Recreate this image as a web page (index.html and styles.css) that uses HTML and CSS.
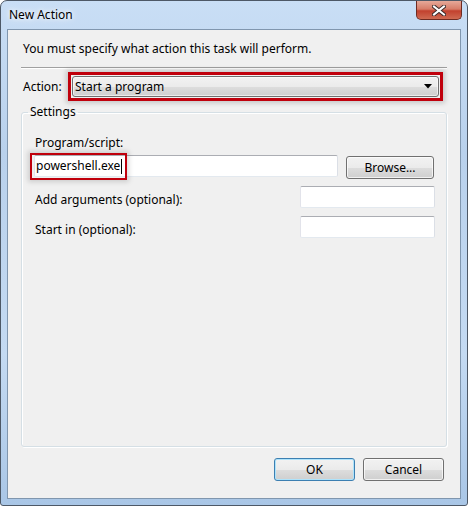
FILE: index.html
```html
<!DOCTYPE html>
<html lang="en">
<head>
    <meta charset="UTF-8">
    <title>New Action</title>
    <link rel="stylesheet" href="styles.css">
</head>
<body>
    <div class="window">
        <div class="titlebar">
            <span class="title">New Action</span>
            <div class="close">
                <svg width="14" height="11" viewBox="0 0 14 11">
                    <path d="M2 1.5 L12 9.5 M12 1.5 L2 9.5" stroke="#3a2a2a" stroke-width="4" stroke-linecap="square"/>
                    <path d="M2 1.5 L12 9.5 M12 1.5 L2 9.5" stroke="#ffffff" stroke-width="2" stroke-linecap="square"/>
                </svg>
            </div>
        </div>

        <div class="client">
            <p class="intro">You must specify what action this task will perform.</p>
            <div class="separator"></div>

            <div class="action-row">
                <span class="action-label">Action:</span>
                <div class="mark-combo">
                    <div class="combo">
                        <span>Start a program</span>
                        <svg width="8" height="5" viewBox="0 0 8 5"><path d="M0 0 H8 L4 4.5 Z" fill="#000"/></svg>
                    </div>
                </div>
            </div>

            <fieldset class="group">
                <legend>Settings</legend>
                <div class="field-label">Program/script:</div>
                <div class="prog-row">
                    <div class="textbox prog-input">powershell.exe<span class="caret"></span></div>
                    <button class="btn browse">Browse...</button>
                    <div class="mark-prog"></div>
                </div>
                <div class="opt-row">
                    <span>Add arguments (optional):</span>
                    <div class="textbox short"></div>
                </div>
                <div class="opt-row second">
                    <span>Start in (optional):</span>
                    <div class="textbox short"></div>
                </div>
            </fieldset>

            <div class="footer">
                <button class="btn default">OK</button>
                <button class="btn">Cancel</button>
            </div>
        </div>
    </div>
</body>
</html>
```

FILE: styles.css
```css
body {
    margin: 0;
    background-color: #ffffff;
    font-family: "Noto Sans", sans-serif;
    font-size: 12px;
    color: #000;
}

.window {
    width: 468px;
    height: 506px;
    box-sizing: border-box;
    border: 1px solid #4d5866;
    border-radius: 7px 7px 3px 3px;
    background: linear-gradient(to bottom, #c9def5 0%, #b9d1ec 30%, #c4daf2 70%, #a9c6e6 100%);
    display: flex;
    flex-direction: column;
}

.titlebar {
    height: 28px;
    display: flex;
    justify-content: space-between;
    align-items: flex-start;
    padding-left: 8px;
}

.title {
    margin-top: 6px;
    line-height: 16px;
    text-shadow: 0 0 8px #ffffff, 0 0 4px #ffffff;
}

.close {
    width: 46px;
    height: 19px;
    margin-right: 5px;
    box-sizing: border-box;
    border: 1px solid #6e2b22;
    border-top: none;
    border-radius: 0 0 5px 5px;
    background: linear-gradient(to bottom, #e6a999 0%, #d67c68 45%, #c2412e 55%, #cf6a52 100%);
    display: flex;
    justify-content: center;
    align-items: center;
}

.client {
    flex: 1;
    margin: 0 6px 6px 6px;
    border: 1px solid #8096ae;
    background-color: #f0f0f0;
    padding: 0 13px 17px 13px;
    display: flex;
    flex-direction: column;
}

.intro {
    margin: 11px 0 0 2px;
    line-height: 16px;
}

.separator {
    margin-top: 10px;
    height: 1px;
    background-color: #a0a0a0;
    border-bottom: 1px solid #ffffff;
}

.action-row {
    margin-top: 3px;
    display: flex;
    align-items: center;
    height: 29px;
}

.action-label {
    width: 45px;
    padding-left: 2px;
}

.mark-combo {
    width: 375px;
    height: 29px;
    box-sizing: border-box;
    border: 3px solid #c0000c;
    padding: 0 1px;
    display: flex;
    align-items: center;
    box-shadow: 0 0 5px 2px rgba(0, 0, 0, 0.18);
}

.combo {
    flex: 1;
    height: 21px;
    box-sizing: border-box;
    border: 1px solid #707070;
    border-radius: 3px;
    background: linear-gradient(to bottom, #f2f2f2 0%, #ebebeb 50%, #dddddd 51%, #cfcfcf 100%);
    box-shadow: inset 0 0 0 1px rgba(255, 255, 255, 0.6);
    display: flex;
    justify-content: space-between;
    align-items: center;
    padding: 0 6px 0 2px;
}

.group {
    flex: 1;
    margin: 3px 0 0 0;
    padding: 15px 11px 0 12px;
    border: 1px solid #d5dfe5;
    border-radius: 3px;
    box-shadow: inset 1px 1px 0 #ffffff, 1px 1px 0 #ffffff;
    min-width: 0;
}

.group legend {
    margin-left: -6px;
    padding: 0 2px;
    line-height: 16px;
}

.field-label {
    padding-left: 1px;
    line-height: 16px;
}

.prog-row {
    position: relative;
    margin-top: 4px;
    display: flex;
    gap: 8px;
}

.textbox {
    height: 22px;
    box-sizing: border-box;
    background-color: #ffffff;
    border: 1px solid #e3e9ef;
    border-top-color: #abadb3;
    border-left-color: #e2e3ea;
    border-right-color: #dbdfe6;
    border-radius: 2px;
}

.prog-input {
    width: 304px;
    padding-left: 1px;
    line-height: 20px;
    display: flex;
    align-items: center;
}

.caret {
    width: 1px;
    height: 15px;
    margin-left: 1px;
    background-color: #000;
}

.mark-prog {
    position: absolute;
    left: -4px;
    top: -2px;
    width: 97px;
    height: 27px;
    box-sizing: border-box;
    border: 2px solid #c0000c;
    box-shadow: 0 0 5px 2px rgba(0, 0, 0, 0.15);
}

.btn {
    font-family: "Noto Sans", sans-serif;
    font-size: 12px;
    color: #000;
    height: 23px;
    border: 1px solid #707070;
    border-radius: 3px;
    background: linear-gradient(to bottom, #f2f2f2 0%, #ebebeb 50%, #dddddd 51%, #cfcfcf 100%);
    box-shadow: inset 0 0 0 1px rgba(255, 255, 255, 0.7);
    padding: 0;
}

.browse {
    width: 88px;
    height: 23px;
    margin-top: 1px;
}

.opt-row {
    margin-top: 7px;
    display: flex;
    justify-content: space-between;
    align-items: flex-end;
    padding-left: 1px;
}

.opt-row.second {
    margin-top: 8px;
}

.opt-row span {
    line-height: 16px;
}

.short {
    width: 135px;
}

.footer {
    margin-top: 11px;
    display: flex;
    justify-content: flex-end;
    gap: 8px;
    padding-right: 3px;
}

.footer .btn {
    width: 81px;
}

.btn.default {
    border-color: #3c7fb1;
    box-shadow: inset 0 0 0 1px #aee3fb;
}
```
